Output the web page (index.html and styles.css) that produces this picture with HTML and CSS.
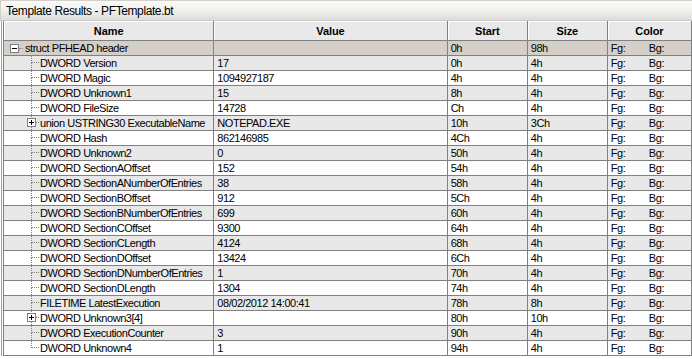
FILE: index.html
```html
<!DOCTYPE html>
<html lang="en">
<head>
    <meta charset="UTF-8">
    <title>Template Results - PFTemplate.bt</title>
    <link rel="stylesheet" href="styles.css">
</head>
<body>
<div class="panel">
    <div class="titlebar">Template Results - PFTemplate.bt</div>
    <div class="frame">
    <table class="results">
        <colgroup>
            <col class="c-name"><col class="c-value"><col class="c-start"><col class="c-size"><col class="c-color">
        </colgroup>
        <thead>
            <tr><th>Name</th><th>Value</th><th>Start</th><th>Size</th><th>Color</th></tr>
        </thead>
        <tbody id="rows"></tbody>
    </table>
    </div>
</div>
<script>
    const rows = [
        ['DWORD Version', '17', '0h', '4h'],
        ['DWORD Magic', '1094927187', '4h', '4h'],
        ['DWORD Unknown1', '15', '8h', '4h'],
        ['DWORD FileSize', '14728', 'Ch', '4h'],
        ['union USTRING30 ExecutableName', 'NOTEPAD.EXE', '10h', '3Ch', 'plus'],
        ['DWORD Hash', '862146985', '4Ch', '4h'],
        ['DWORD Unknown2', '0', '50h', '4h'],
        ['DWORD SectionAOffset', '152', '54h', '4h'],
        ['DWORD SectionANumberOfEntries', '38', '58h', '4h'],
        ['DWORD SectionBOffset', '912', '5Ch', '4h'],
        ['DWORD SectionBNumberOfEntries', '699', '60h', '4h'],
        ['DWORD SectionCOffset', '9300', '64h', '4h'],
        ['DWORD SectionCLength', '4124', '68h', '4h'],
        ['DWORD SectionDOffset', '13424', '6Ch', '4h'],
        ['DWORD SectionDNumberOfEntries', '1', '70h', '4h'],
        ['DWORD SectionDLength', '1304', '74h', '4h'],
        ['FILETIME LatestExecution', '08/02/2012 14:00:41', '78h', '8h'],
        ['DWORD Unknown3[4]', '', '80h', '10h', 'plus'],
        ['DWORD ExecutionCounter', '3', '90h', '4h'],
        ['DWORD Unknown4', '1', '94h', '4h', 'last']
    ];

    const plusBox = '<svg class="box" width="9" height="9" viewBox="0 0 9 9"><rect x="0.5" y="0.5" width="8" height="8" fill="#fff" stroke="#808080"/><path d="M2 4.5h5M4.5 2v5" stroke="#000"/></svg>';
    const minusBox = '<svg class="box" width="9" height="9" viewBox="0 0 9 9"><rect x="0.5" y="0.5" width="8" height="8" fill="#fff" stroke="#808080"/><path d="M2 4.5h5" stroke="#000"/></svg>';

    const tbody = document.getElementById('rows');
    let html = `<tr class="root">
        <td><div class="name lvl0">${minusBox}<span class="dots"></span><span class="label">struct PFHEAD header</span></div></td>
        <td></td><td>0h</td><td>98h</td><td><span class="fg">Fg:</span>Bg:</td></tr>`;

    rows.forEach((r, i) => {
        const kind = r[4] || '';
        let branch;
        if (kind === 'plus') {
            branch = `<span class="branch"><span class="top"></span><span class="bottom"></span><span class="boxwrap">${plusBox}<span class="dots"></span></span></span>`;
        } else {
            branch = `<span class="branch ${kind}"><span class="top"></span><span class="bottom"></span></span>`;
        }
        html += `<tr class="${i % 2 === 0 ? 'alt' : ''}">
            <td><div class="name">${branch}<span class="label">${r[0]}</span></div></td>
            <td>${r[1]}</td><td>${r[2]}</td><td>${r[3]}</td>
            <td><span class="fg">Fg:</span>Bg:</td></tr>`;
    });
    tbody.innerHTML = html;
</script>
</body>
</html>
```

FILE: styles.css
```css
body {
    margin: 0;
    background: #fff;
    font-family: Tahoma, "Liberation Sans", Arial, sans-serif;
    font-size: 11px;
    color: #000;
}

.panel {
    width: 692px;
    height: 359px;
    overflow: hidden;
}

.titlebar {
    height: 21px;
    line-height: 20px;
    padding-left: 5px;
    box-sizing: border-box;
    border-top: 1px solid #d4d0c8;
    border-left: 1px solid #d4d0c8;
    border-bottom: 1px solid #c8c8c8;
    background: linear-gradient(#fbfbfa 0%, #f1f1ef 45%, #dcdcd8 100%);
    font-size: 12px;
    letter-spacing: -0.4px;
}

.frame {
    margin-left: 1px;
    width: 690px;
    border-left: 1px solid #a0a0a0;
    border-right: 1px solid #a0a0a0;
    padding-left: 1px;
    background: #fff;
}

.results {
    border-collapse: collapse;
    table-layout: fixed;
    width: 689px;
    border-left: 1px solid #808080;
}

.c-name { width: 210px; }
.c-value { width: 233px; }
.c-start { width: 80px; }
.c-size { width: 80px; }
.c-color { width: 84px; }

th {
    height: 19px;
    padding: 0;
    font-weight: bold;
    font-size: 11px;
    letter-spacing: -0.1px;
    text-align: center;
    border-right: 1px solid #808080;
    border-bottom: 1px solid #808080;
    box-shadow: inset 1px 1px 0 #fff;
    background-color: #f0f0f0;
    background-image: repeating-conic-gradient(#dcdcdc 0 25%, #f6f6f6 0 50%);
    background-size: 2px 2px;
}

td {
    height: 13px;
    padding: 1px 0 0 3px;
    border-right: 1px solid #808080;
    border-bottom: 1px solid #808080;
    white-space: nowrap;
    overflow: hidden;
    line-height: 13px;
    letter-spacing: -0.45px;
    font-size: 11px;
}

tr.alt td { background: #e8e8e8; }
tr.root td { background: #d4d0c8; }

td:first-child {
    padding: 0;
    height: 14px;
}

.fg {
    display: inline-block;
    width: 38px;
}

.name {
    display: flex;
    align-items: stretch;
    height: 14px;
    padding-left: 27px;
}

.name.lvl0 {
    padding-left: 6px;
    align-items: center;
}

.dots {
    flex: none;
    width: 4px;
    border-top: 1px dotted #808080;
    margin-right: 1px;
}

.lvl0 .dots {
    align-self: center;
    margin-top: 1px;
}

.branch {
    flex: none;
    position: relative;
    width: 8px;
    display: flex;
    flex-direction: column;
}

.branch .top {
    height: 7px;
    border-left: 1px dotted #808080;
    border-bottom: 1px dotted #808080;
    box-sizing: border-box;
}

.branch .bottom {
    flex: 1;
    border-left: 1px dotted #808080;
}

.branch.last .bottom { border-left: none; }

.boxwrap {
    position: absolute;
    left: -4px;
    top: 2px;
    display: flex;
    align-items: center;
}

.boxwrap .dots { width: 3px; }

.box { display: block; flex: none; }

.label {
    flex: none;
    padding: 1px 0 0 1px;
    line-height: 13px;
}
```
